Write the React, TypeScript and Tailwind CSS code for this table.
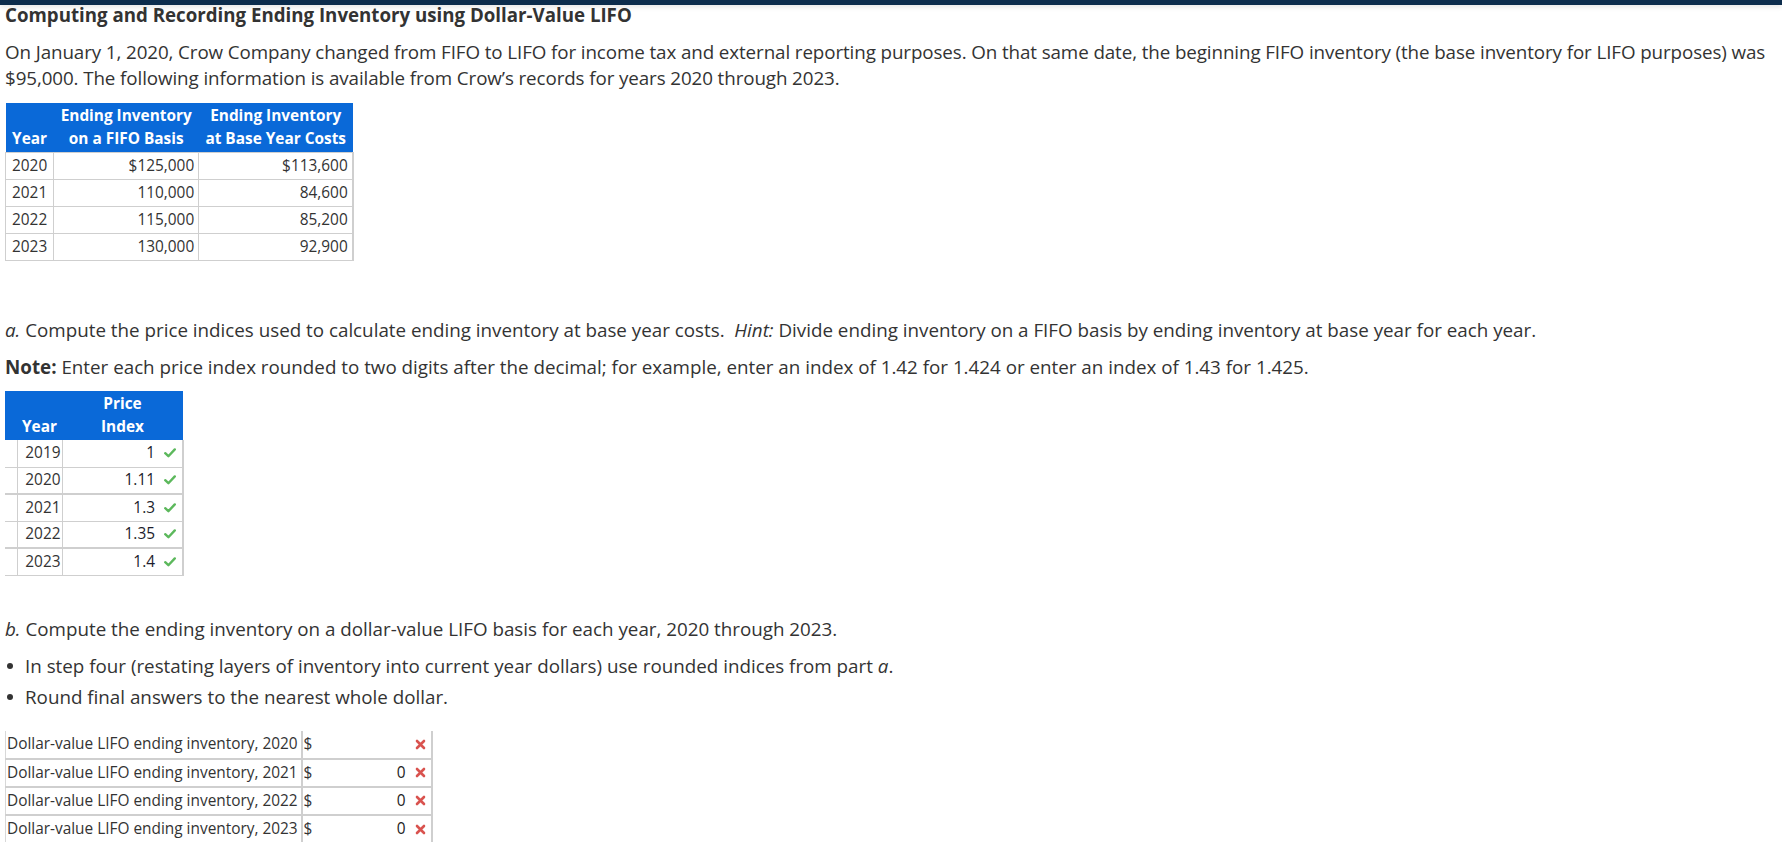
import React from "react";

const Check = () => (
  <svg width="12" height="10" viewBox="0 0 12 10" className="inline-block">
    <path d="M1.2 5.2 L4.4 8.2 L10.8 1.4" fill="none" stroke="#5cb85c" strokeWidth="2.4" strokeLinecap="round" strokeLinejoin="round" />
  </svg>
);

const Cross = () => (
  <svg width="11" height="11" viewBox="0 0 11 11" className="inline-block">
    <path d="M2 2 L9 9 M9 2 L2 9" fill="none" stroke="#d9534f" strokeWidth="2.6" strokeLinecap="round" />
  </svg>
);

export default function App() {
  const t1 = [
    ["2020", "$125,000", "$113,600"],
    ["2021", "110,000", "84,600"],
    ["2022", "115,000", "85,200"],
    ["2023", "130,000", "92,900"],
  ];
  const t2: [string, string, boolean][] = [
    ["2019", "1", false],
    ["2020", "1.11", true],
    ["2021", "1.3", false],
    ["2022", "1.35", true],
    ["2023", "1.4", false],
  ];
  const t3 = [
    ["2020", ""],
    ["2021", "0"],
    ["2022", "0"],
    ["2023", "0"],
  ];
  return (
    <div className="min-h-[842px] bg-white font-['Open_Sans',sans-serif] text-[#333]">
      <div className="h-[5px] bg-[#0c2c4c] shadow-[0_2px_5px_rgba(0,0,0,0.12)]" />
      <div className="pl-[5px]">
        <h1 className="text-[18.7px] font-bold leading-[20px] text-[#333]">
          Computing and Recording Ending Inventory using Dollar-Value LIFO
        </h1>
        <p className="mt-[14px] text-[18.8px] leading-[26px] tracking-[-0.1px]">
          On January 1, 2020, Crow Company changed from FIFO to LIFO for income tax and external reporting purposes. On that same date, the beginning FIFO inventory (the base inventory for LIFO purposes) was $95,000. The following information is available from Crow’s records for years 2020 through 2023.
        </p>

        <table className="mt-[12px] border-collapse text-[15.4px]">
          <thead>
            <tr className="bg-[#0a69d8] text-white text-[15.4px] font-bold leading-[23px]">
              <th className="w-[47px] px-[2px] pt-[1px] pb-[2px] align-bottom text-center font-bold">Year</th>
              <th className="w-[145px] px-[2px] pt-[1px] pb-[2px] align-bottom text-center font-bold">
                Ending Inventory
                <br />
                on a FIFO Basis
              </th>
              <th className="w-[154px] px-[2px] pt-[1px] pb-[2px] align-bottom text-center font-bold">
                Ending Inventory
                <br />
                at Base Year Costs
              </th>
            </tr>
          </thead>
          <tbody>
            {t1.map((r) => (
              <tr key={r[0]} className="h-[27px] leading-[20px]">
                <td className="border border-[#cfcfcf] px-[6px] text-left">{r[0]}</td>
                <td className="border border-[#cfcfcf] px-[4px] text-right">{r[1]}</td>
                <td className="border-y border-l border-r-2 border-[#cfcfcf] px-[4px] text-right">{r[2]}</td>
              </tr>
            ))}
          </tbody>
        </table>

        <p className="mt-[56px] text-[18.8px] leading-[26px]">
          <i>a.</i> Compute the price indices used to calculate ending inventory at base year costs.&nbsp;&nbsp;<i>Hint:</i> Divide ending inventory on a FIFO basis by ending inventory at base year for each year.
        </p>
        <p className="mt-[11px] text-[18.8px] leading-[26px]">
          <b>Note:</b> Enter each price index rounded to two digits after the decimal; for example, enter an index of 1.42 for 1.424 or enter an index of 1.43 for 1.425.
        </p>

        <table className="mt-[11px] border-collapse text-[15.4px]">
          <thead>
            <tr className="bg-[#0a69d8] text-white text-[15.4px] font-bold leading-[23px]">
              <th className="w-[12px] p-0" />
              <th className="w-[45px] p-0 pb-[2px] pt-[1px] align-bottom text-center font-bold">Year</th>
              <th className="w-[121px] p-0 pb-[2px] pt-[1px] align-bottom text-center font-bold">
                Price
                <br />
                Index
              </th>
            </tr>
          </thead>
          <tbody>
            {t2.map(([y, v, thick]) => (
              <tr key={y} className={`h-[27px] leading-[20px] ${thick ? "border-b-2" : "border-b"} border-[#cfcfcf]`}>
                <td className="p-0" />
                <td className="border-x border-[#cfcfcf] p-0 pr-[1px] text-right">{y}</td>
                <td className="border-r-2 border-[#cfcfcf] p-0 pr-[6px] text-right text-[#1c1c2c]">
                  <span className="inline-flex items-center justify-end gap-[9px]">
                    <span>{v}</span>
                    <Check />
                  </span>
                </td>
              </tr>
            ))}
          </tbody>
        </table>

        <p className="mt-[40px] text-[18.8px] leading-[26px]">
          <i>b.</i> Compute the ending inventory on a dollar-value LIFO basis for each year, 2020 through 2023.
        </p>
        <ul className="mt-[11px] flex flex-col gap-[5px] text-[18.8px] leading-[26px]">
          <li className="flex items-center">
            <span className="ml-[2px] mr-[12px] h-[6px] w-[6px] rounded-full bg-[#333]" />
            <span>
              In step four (restating layers of inventory into current year dollars) use rounded indices from part <i>a</i>.
            </span>
          </li>
          <li className="flex items-center">
            <span className="ml-[2px] mr-[12px] h-[6px] w-[6px] rounded-full bg-[#333]" />
            <span>Round final answers to the nearest whole dollar.</span>
          </li>
        </ul>

        <table className="mt-[21px] border-collapse text-[15.4px]">
          <tbody>
            {t3.map(([y, v], i) => (
              <tr key={y} className={`h-[28px] leading-[20px] ${i < 3 ? "border-b-2" : ""} border-[#cfcfcf]`}>
                <td className="w-[296px] whitespace-nowrap border-l border-[#d8d8d8] p-0 pl-[1px] text-left">
                  Dollar-value LIFO ending inventory, {y}
                </td>
                <td className="w-[130px] border-x-2 border-[#cfcfcf] p-0 pl-[1px] pr-[5px]">
                  <div className="flex items-center">
                    <span>$</span>
                    <span className="flex-1 text-right text-[#222]">{v}</span>
                    <span className="ml-[9px] flex items-center">
                      <Cross />
                    </span>
                  </div>
                </td>
              </tr>
            ))}
          </tbody>
        </table>
      </div>
    </div>
  );
}
